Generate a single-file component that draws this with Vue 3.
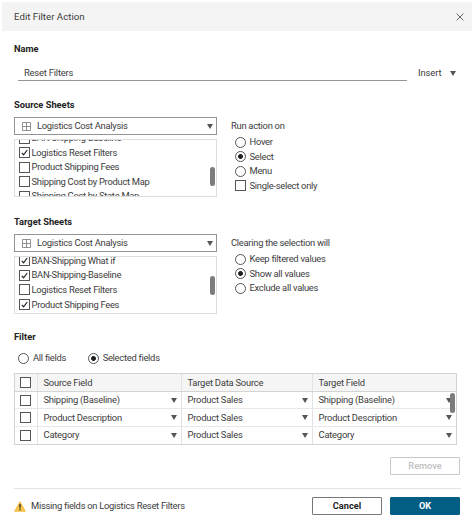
<script setup>
import { ref } from 'vue'

const sourceSheets = [
  { name: 'BAN-Shipping-Baseline', checked: false },
  { name: 'Logistics Reset Filters', checked: true },
  { name: 'Product Shipping Fees', checked: false },
  { name: 'Shipping Cost by Product Map', checked: false },
  { name: 'Shipping Cost by State Map', checked: false },
]
const targetSheets = [
  { name: 'BAN-Shipping What if', checked: true },
  { name: 'BAN-Shipping-Baseline', checked: true },
  { name: 'Logistics Reset Filters', checked: false },
  { name: 'Product Shipping Fees', checked: true },
]
const runOptions = ['Hover', 'Select', 'Menu']
const clearOptions = ['Keep filtered values', 'Show all values', 'Exclude all values']
const fields = ['Shipping (Baseline)', 'Product Description', 'Category']

const runOn = ref('Select')
const clearing = ref('Show all values')
const scope = ref('Selected fields')
</script>

<template>
  <div class="dialog">
    <header class="titlebar">
      <span class="title">Edit Filter Action</span>
      <svg class="close" viewBox="0 0 8 8"><path d="M.6.6l6.8 6.8M7.4.6L.6 7.4" /></svg>
    </header>

    <main class="body">
      <h2 class="name-heading">Name</h2>
      <div class="name-row">
        <div class="name-input">Reset Filters</div>
        <div class="insert"><span>Insert</span><i class="arrow"></i></div>
      </div>

      <h2 class="source-heading">Source Sheets</h2>
      <section class="sheets">
        <div class="picker">
          <div class="select">
            <svg class="grid-icon" viewBox="0 0 9 9"><path d="M.5.5h8v8h-8zM4.5.5v8M.5 4.5h8" /></svg>
            <span class="select-text">Logistics Cost Analysis</span><i class="arrow"></i>
          </div>
          <div class="list">
            <div class="items source-items">
              <div v-for="s in sourceSheets" :key="s.name" class="item">
                <span class="box"><svg v-if="s.checked" viewBox="0 0 10 10"><path d="M2 5.3l2 2.2L8 2.2" /></svg></span>
                <span>{{ s.name }}</span>
              </div>
            </div>
            <i class="thumb source-thumb"></i>
          </div>
        </div>
        <div class="options">
          <div class="caption">Run action on</div>
          <div v-for="o in runOptions" :key="o" class="option" @click="runOn = o">
            <span class="radio" :class="{ on: runOn === o }"></span><span>{{ o }}</span>
          </div>
          <div class="option"><span class="box"></span><span>Single-select only</span></div>
        </div>
      </section>

      <h2 class="target-heading">Target Sheets</h2>
      <section class="sheets">
        <div class="picker">
          <div class="select">
            <svg class="grid-icon" viewBox="0 0 9 9"><path d="M.5.5h8v8h-8zM4.5.5v8M.5 4.5h8" /></svg>
            <span class="select-text">Logistics Cost Analysis</span><i class="arrow"></i>
          </div>
          <div class="list">
            <div class="items target-items">
              <div v-for="s in targetSheets" :key="s.name" class="item">
                <span class="box"><svg v-if="s.checked" viewBox="0 0 10 10"><path d="M2 5.3l2 2.2L8 2.2" /></svg></span>
                <span>{{ s.name }}</span>
              </div>
            </div>
            <i class="thumb target-thumb"></i>
          </div>
        </div>
        <div class="options">
          <div class="caption">Clearing the selection will</div>
          <div v-for="o in clearOptions" :key="o" class="option" @click="clearing = o">
            <span class="radio" :class="{ on: clearing === o }"></span><span>{{ o }}</span>
          </div>
        </div>
      </section>

      <h2 class="filter-heading">Filter</h2>
      <div class="scopes">
        <div v-for="o in ['All fields', 'Selected fields']" :key="o" class="scope" @click="scope = o">
          <span class="radio" :class="{ on: scope === o }"></span><span>{{ o }}</span>
        </div>
      </div>

      <div class="table">
        <div class="tr head">
          <div class="td check"><span class="box"></span></div>
          <div class="td">Source Field</div>
          <div class="td">Target Data Source</div>
          <div class="td">Target Field</div>
        </div>
        <div v-for="f in fields" :key="f" class="tr">
          <div class="td check"><span class="box"></span></div>
          <div class="td"><span>{{ f }}</span><i class="arrow"></i></div>
          <div class="td"><span>Product Sales</span><i class="arrow"></i></div>
          <div class="td"><span>{{ f }}</span><i class="arrow"></i></div>
        </div>
        <i class="thumb table-thumb"></i>
      </div>

      <div class="remove-row"><button class="btn disabled">Remove</button></div>

      <footer class="footer">
        <svg class="warn" viewBox="0 0 12 11">
          <path d="M6 .7L11.4 10.3H.6z" fill="#fbc544" stroke="#f3b53a" stroke-width=".8" stroke-linejoin="round" />
          <path d="M5.3 3.3h1.4L6.4 7.3h-.8z" fill="#333" stroke="#333" stroke-width=".3" />
          <circle cx="6" cy="8.8" r=".75" fill="#333" />
        </svg>
        <span class="message">Missing fields on Logistics Reset Filters</span>
        <button class="btn cancel">Cancel</button>
        <button class="btn ok">OK</button>
      </footer>
    </main>
  </div>
</template>

<style>
body {
  background: #fff;
}
</style>

<style scoped>
* {
  box-sizing: border-box;
}
.dialog {
  width: 474px;
  height: 529px;
  overflow: hidden;
  padding: 2px 2px 0;
  background: #fff;
  color: #3c3c3c;
  font-family: Roboto, "Liberation Sans", sans-serif;
  font-size: 9.4px;
  letter-spacing: -0.28px;
  line-height: 14px;
  white-space: nowrap;
}
.titlebar {
  height: 29px;
  padding: 0 8px 0 12px;
  display: flex;
  align-items: center;
  justify-content: space-between;
  background: #f4f4f4;
}
.title {
  font-size: 9.7px;
  letter-spacing: 0;
}
.close {
  width: 8px;
  height: 8px;
  fill: none;
  stroke: #555;
  stroke-width: 0.9;
}
.body {
  padding: 0 11px 0 12px;
}
h2 {
  margin: 0;
  height: 14px;
  color: #222;
  font-size: 9.3px;
  font-weight: 700;
  letter-spacing: 0;
  line-height: 14px;
}
.name-heading {
  margin-top: 11px;
}
.name-row {
  display: flex;
  align-items: flex-start;
  margin: 8px 0 0 4px;
  height: 18px;
}
.name-input {
  width: 389px;
  height: 17px;
  padding: 2px 0 0 6px;
  border-bottom: 1px solid #969696;
  letter-spacing: -0.2px;
}
.insert {
  display: flex;
  align-items: center;
  gap: 9px;
  padding: 2px 0 0 11px;
  letter-spacing: -0.1px;
}
.arrow {
  width: 0;
  height: 0;
  border: 3px solid transparent;
  border-top: 5px solid #555;
  border-bottom: 0;
}
.source-heading {
  margin-top: 16px;
}
.target-heading {
  margin-top: 18px;
}
.filter-heading {
  margin-top: 16px;
}
.sheets {
  display: flex;
  margin-top: 5px;
  height: 80px;
}
.picker {
  width: 203px;
}
.select {
  display: flex;
  align-items: center;
  height: 18px;
  padding: 0 3px 0 7px;
  border: 1px solid #949494;
}
.grid-icon {
  width: 9px;
  height: 9px;
  fill: none;
  stroke: #777;
  stroke-width: 0.8;
}
.select-text {
  flex: 1;
  margin-left: 6px;
}
.list {
  position: relative;
  height: 58px;
  margin-top: 4px;
  overflow: hidden;
  border: 1px solid #dedede;
}
.items {
  padding-left: 4px;
}
.source-items {
  margin-top: -9px;
}
.target-items {
  margin-top: -3.4px;
}
.item {
  display: flex;
  align-items: center;
  gap: 1.5px;
  height: 14.55px;
}
.box {
  display: block;
  flex: none;
  width: 11px;
  height: 11px;
  border: 1px solid #555;
  background: #fff;
}
.box svg {
  display: block;
  width: 9px;
  height: 9px;
  fill: none;
  stroke: #222;
  stroke-width: 1.3;
}
.thumb {
  position: absolute;
  width: 5px;
  border-radius: 3px;
  background: #7c7c7c;
}
.source-thumb {
  top: 27px;
  right: 1px;
  height: 19px;
}
.target-thumb {
  top: 19px;
  right: 1px;
  height: 19px;
}
.options {
  padding: 2px 0 0 14px;
}
.caption {
  height: 16px;
}
.option {
  display: flex;
  align-items: center;
  gap: 3.5px;
  height: 14.5px;
  margin-left: 4px;
}
.radio {
  display: block;
  flex: none;
  width: 11px;
  height: 11px;
  border: 1px solid #555;
  border-radius: 50%;
  background: #fff;
}
.radio.on {
  background: radial-gradient(circle, #222 2.1px, #fff 2.7px);
}
.scopes {
  display: flex;
  gap: 21.5px;
  height: 14px;
  margin: 7px 0 0 4px;
}
.scope {
  display: flex;
  align-items: center;
  gap: 4px;
}
.table {
  position: relative;
  width: 443px;
  margin-top: 8px;
  border: 1px solid #d4d4d4;
  letter-spacing: -0.22px;
}
.tr {
  display: grid;
  grid-template-columns: 23px 144px 131px 143px;
  height: 17.4px;
  border-bottom: 1px solid #e8e8e8;
}
.tr:last-of-type {
  height: 17px;
  border-bottom: 0;
}
.head {
  height: 18px;
  background: #f5f5f5;
  border-color: #d4d4d4;
}
.td {
  display: flex;
  align-items: center;
  justify-content: space-between;
  padding: 0 4px 0 5.5px;
  border-right: 1px solid #e2e2e2;
}
.td:last-child {
  border-right: 0;
}
.check {
  padding-left: 5px;
}
.table-thumb {
  top: 19px;
  right: 1px;
  height: 20px;
}
.remove-row {
  display: flex;
  justify-content: flex-end;
  height: 32px;
  margin-top: 12.2px;
  padding-right: 1px;
  border-bottom: 1px solid #e4e4e4;
}
.btn {
  width: 70px;
  height: 18px;
  padding: 0;
  border: 1px solid #777;
  border-radius: 1px;
  background: #fff;
  color: #222;
  font: 700 9.2px/14px Roboto, "Liberation Sans", sans-serif;
}
.disabled {
  border-color: #c8c8c8;
  color: #c0c0c0;
  font-weight: 500;
}
.footer {
  display: flex;
  align-items: center;
  height: 35px;
  padding-right: 1px;
}
.warn {
  width: 12px;
  height: 11px;
  margin-right: 5px;
}
.message {
  flex: 1;
}
.ok {
  margin-left: 8px;
  border-color: #035e86;
  background: #035e86;
  color: #fff;
}
</style>
